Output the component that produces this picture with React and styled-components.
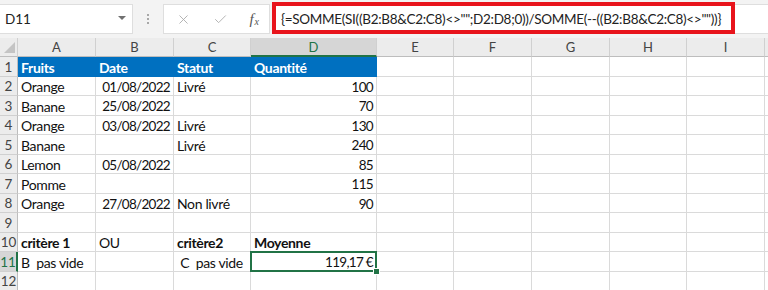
import React from 'react';
import styled, { createGlobalStyle, css } from 'styled-components';
import { X, Check } from 'lucide-react';

const GlobalStyle = createGlobalStyle`
  html, body { margin: 0; padding: 0; background: #fff; }
  body { font-family: Lato, "Open Sans", sans-serif; }
`;

const Page = styled.div`
  width: 768px;
  height: 290px;
  overflow: hidden;
  background: #fff;
`;

const Toolbar = styled.div`
  height: 38px;
  box-sizing: border-box;
  background: #f3f3f3;
  display: flex;
  align-items: flex-start;
  padding-top: 4px;
`;

const NameBox = styled.div`
  width: 133px;
  height: 30px;
  box-sizing: border-box;
  background: #fff;
  border: 1px solid #dedede;
  border-left: none;
  display: flex;
  align-items: center;
  justify-content: space-between;
  padding: 0 6px 0 5px;
  font-size: 13.5px;
  color: #222;
`;

const Arrow = styled.span`
  width: 0;
  height: 0;
  border-left: 4px solid transparent;
  border-right: 4px solid transparent;
  border-top: 4px solid #707070;
  margin-top: -2px;
`;

const Grip = styled.div`
  width: 30px;
  height: 30px;
  display: flex;
  flex-direction: column;
  align-items: center;
  justify-content: center;
  gap: 2px;
  & > i {
    width: 2px;
    height: 2px;
    background: #a8a8a8;
    display: block;
  }
`;

const FxButtons = styled.div`
  width: 107px;
  height: 30px;
  box-sizing: border-box;
  background: #fff;
  border: 1px solid #dedede;
  display: flex;
  align-items: center;
  justify-content: space-between;
  padding: 0 10px 0 12px;
  color: #a9a9a9;
`;

const Fx = styled.span`
  font-family: "Liberation Serif", serif;
  font-style: italic;
  color: #555;
  font-size: 15px;
  line-height: 1;
  & > sub {
    font-size: 10px;
    vertical-align: -1px;
    margin-left: 1px;
  }
`;

const FormulaInput = styled.div`
  flex: 1;
  margin-left: 4px;
  height: 30px;
  box-sizing: border-box;
  background: #fff;
  border: 1px solid #dedede;
  border-right: none;
  position: relative;
  display: flex;
  align-items: center;
  padding-left: 6px;
  font-size: 13.5px;
  letter-spacing: -0.3px;
  color: #222;
  white-space: nowrap;
`;

const RedMark = styled.div`
  position: absolute;
  left: -3px;
  top: -3px;
  width: 463px;
  height: 32px;
  box-sizing: border-box;
  border: 4px solid #e8141c;
  pointer-events: none;
`;

const Sheet = styled.div`
  display: grid;
  grid-template-columns: 18px 78px 78px 77px 126px 77px 78px 78px 77px 78px 1fr;
  grid-template-rows: 19px repeat(12, 19.5px);
`;

const Corner = styled.div`
  background: #ececec;
  border-right: 1px solid #d0d0d0;
  border-bottom: 1px solid #bdbdbd;
  box-sizing: border-box;
  position: relative;
  &::after {
    content: "";
    position: absolute;
    right: 2px;
    bottom: 3px;
    width: 0;
    height: 0;
    border-left: 11px solid transparent;
    border-bottom: 11px solid #c4c4c4;
  }
`;

const ColHead = styled.div`
  box-sizing: border-box;
  background: ${p => (p.$sel ? '#d6d6d6' : '#ececec')};
  border-right: 1px solid #d0d0d0;
  border-bottom: ${p => (p.$sel ? '2px solid #217346' : '1px solid #bdbdbd')};
  display: flex;
  align-items: center;
  justify-content: center;
  font-size: 13px;
  color: ${p => (p.$sel ? '#217346' : '#444')};
`;

const RowHead = styled.div`
  box-sizing: border-box;
  background: ${p => (p.$sel ? '#d6d6d6' : '#ececec')};
  border-bottom: 1px solid #d0d0d0;
  border-right: ${p => (p.$sel ? '2px solid #217346' : '1px solid #bdbdbd')};
  display: flex;
  align-items: center;
  justify-content: center;
  font-size: 13.5px;
  color: ${p => (p.$sel ? '#217346' : '#444')};
  padding-top: 1px;
`;

const Cell = styled.div`
  box-sizing: border-box;
  border-right: 1px solid #dadada;
  border-bottom: 1px solid #dadada;
  display: flex;
  align-items: center;
  justify-content: ${p => (p.$right ? 'flex-end' : 'flex-start')};
  padding: 2px 3px 0 3px;
  font-size: ${p => (p.$right ? '13.5px' : '14px')};
  letter-spacing: ${p => (p.$right ? '-0.7px' : '-0.35px')};
  color: #111;
  white-space: pre;
  overflow: visible;
  position: relative;
  font-weight: ${p => (p.$bold ? 700 : 400)};
  ${p =>
    p.$blue &&
    css`
      background: #0070c0;
      color: #fff;
      border-right-color: #0070c0;
      border-bottom-color: #0070c0;
    `}
  ${p =>
    p.$sel &&
    css`
      &::after {
        content: "";
        position: absolute;
        left: -1px;
        top: -1px;
        right: -1px;
        bottom: -1px;
        border: 2px solid #217346;
        pointer-events: none;
      }
      &::before {
        content: "";
        position: absolute;
        right: -4px;
        bottom: -4px;
        width: 5px;
        height: 5px;
        background: #217346;
        border: 1px solid #fff;
        z-index: 2;
      }
    `}
`;

const cols = ['A', 'B', 'C', 'D', 'E', 'F', 'G', 'H', 'I', 'J'];

const data = [
  [{ t: 'Fruits', blue: 1, bold: 1 }, { t: 'Date', blue: 1, bold: 1 }, { t: 'Statut', blue: 1, bold: 1 }, { t: 'Quantité', blue: 1, bold: 1 }],
  [{ t: 'Orange' }, { t: '01/08/2022', r: 1 }, { t: 'Livré' }, { t: '100', r: 1 }],
  [{ t: 'Banane' }, { t: '25/08/2022', r: 1 }, { t: '' }, { t: '70', r: 1 }],
  [{ t: 'Orange' }, { t: '03/08/2022', r: 1 }, { t: 'Livré' }, { t: '130', r: 1 }],
  [{ t: 'Banane' }, { t: '' }, { t: 'Livré' }, { t: '240', r: 1 }],
  [{ t: 'Lemon' }, { t: '05/08/2022', r: 1 }, { t: '' }, { t: '85', r: 1 }],
  [{ t: 'Pomme' }, { t: '' }, { t: '' }, { t: '115', r: 1 }],
  [{ t: 'Orange' }, { t: '27/08/2022', r: 1 }, { t: 'Non livré' }, { t: '90', r: 1 }],
  [],
  [{ t: 'critère 1', bold: 1 }, { t: 'OU' }, { t: 'critère2', bold: 1 }, { t: 'Moyenne', bold: 1 }],
  [{ t: 'B  pas vide' }, { t: '' }, { t: ' C  pas vide' }, { t: '119,17 €', r: 1, sel: 1 }],
  [],
];

export default function App() {
  return (
    <Page>
      <GlobalStyle />
      <Toolbar>
        <NameBox>
          <span>D11</span>
          <Arrow />
        </NameBox>
        <Grip>
          <i />
          <i />
          <i />
        </Grip>
        <FxButtons>
          <X size={15} strokeWidth={1.4} />
          <Check size={15} strokeWidth={1.4} />
          <Fx>
            f<sub>x</sub>
          </Fx>
        </FxButtons>
        <FormulaInput>
          {'{=SOMME(SI((B2:B8&C2:C8)<>"";D2:D8;0))/SOMME(--((B2:B8&C2:C8)<>""))}'}
          <RedMark />
        </FormulaInput>
      </Toolbar>
      <Sheet>
        <Corner />
        {cols.map(c => (
          <ColHead key={c} $sel={c === 'D'}>
            {c === 'J' ? '' : c}
          </ColHead>
        ))}
        {data.map((row, ri) => (
          <React.Fragment key={ri}>
            <RowHead $sel={ri === 10}>{ri + 1}</RowHead>
            {cols.map((c, ci) => {
              const d = row[ci] || { t: '' };
              return (
                <Cell key={c} $right={d.r} $bold={d.bold} $blue={d.blue} $sel={d.sel}>
                  {d.t}
                </Cell>
              );
            })}
          </React.Fragment>
        ))}
      </Sheet>
    </Page>
  );
}
